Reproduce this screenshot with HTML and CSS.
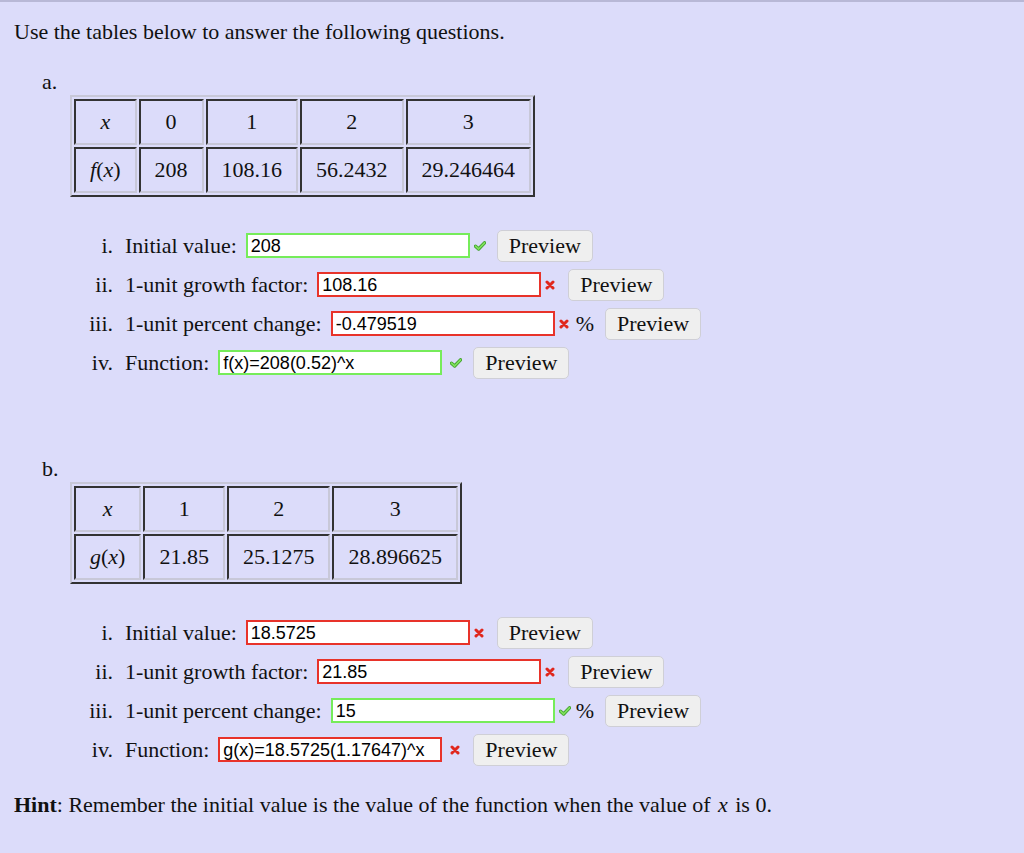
FILE: index.html
```html
<!DOCTYPE html>
<html lang="en">
<head>
<meta charset="UTF-8" />
<title>Exponential functions from tables</title>
<link rel="stylesheet" href="styles.css">
</head>
<body>

<div class="question">
    <p class="intro">Use the tables below to answer the following questions.</p>

    <!-- part a -->
    <div class="part-label">a.</div>
    <table class="values">
        <tr>
            <td><i>x</i></td>
            <td>0</td>
            <td>1</td>
            <td>2</td>
            <td>3</td>
        </tr>
        <tr>
            <td><i>f</i>(<i>x</i>)</td>
            <td>208</td>
            <td>108.16</td>
            <td>56.2432</td>
            <td>29.246464</td>
        </tr>
    </table>

    <div class="answers">
        <div class="item">
            <span class="num">i.</span>
            <span class="label">Initial value:</span>
            <input class="ans correct" type="text" value="208">
            <span class="mark"><svg width="12" height="10" viewBox="0 0 12 10"><path d="M1.5 5.2 L4.6 8 L10.5 1.8" fill="none" stroke="#3f9f2c" stroke-width="3.4" stroke-linecap="round" stroke-linejoin="round"/><path d="M1.5 5.2 L4.6 8 L10.5 1.8" fill="none" stroke="#7fe05c" stroke-width="1.8" stroke-linecap="round" stroke-linejoin="round"/></svg></span>
            <button>Preview</button>
        </div>
        <div class="item">
            <span class="num">ii.</span>
            <span class="label">1-unit growth factor:</span>
            <input class="ans wrong" type="text" value="108.16">
            <span class="mark"><svg width="10" height="10" viewBox="0 0 10 10"><path d="M2 2 L8 8 M8 2 L2 8" stroke="#e0271d" stroke-width="3" stroke-linecap="round"/></svg></span>
            <button>Preview</button>
        </div>
        <div class="item">
            <span class="num">iii.</span>
            <span class="label">1-unit percent change:</span>
            <input class="ans wrong" type="text" value="-0.479519">
            <span class="mark"><svg width="10" height="10" viewBox="0 0 10 10"><path d="M2 2 L8 8 M8 2 L2 8" stroke="#e0271d" stroke-width="3" stroke-linecap="round"/></svg></span>
            <span class="pct">%</span>
            <button>Preview</button>
        </div>
        <div class="item">
            <span class="num">iv.</span>
            <span class="label">Function:</span>
            <input class="ans correct" type="text" value="f(x)=208(0.52)^x">
            <span class="mark loose"><svg width="12" height="10" viewBox="0 0 12 10"><path d="M1.5 5.2 L4.6 8 L10.5 1.8" fill="none" stroke="#3f9f2c" stroke-width="3.4" stroke-linecap="round" stroke-linejoin="round"/><path d="M1.5 5.2 L4.6 8 L10.5 1.8" fill="none" stroke="#7fe05c" stroke-width="1.8" stroke-linecap="round" stroke-linejoin="round"/></svg></span>
            <button>Preview</button>
        </div>
    </div>

    <!-- part b -->
    <div class="part-label part-b">b.</div>
    <table class="values">
        <tr>
            <td><i>x</i></td>
            <td>1</td>
            <td>2</td>
            <td>3</td>
        </tr>
        <tr>
            <td><i>g</i>(<i>x</i>)</td>
            <td>21.85</td>
            <td>25.1275</td>
            <td>28.896625</td>
        </tr>
    </table>

    <div class="answers">
        <div class="item">
            <span class="num">i.</span>
            <span class="label">Initial value:</span>
            <input class="ans wrong" type="text" value="18.5725">
            <span class="mark"><svg width="10" height="10" viewBox="0 0 10 10"><path d="M2 2 L8 8 M8 2 L2 8" stroke="#e0271d" stroke-width="3" stroke-linecap="round"/></svg></span>
            <button>Preview</button>
        </div>
        <div class="item">
            <span class="num">ii.</span>
            <span class="label">1-unit growth factor:</span>
            <input class="ans wrong" type="text" value="21.85">
            <span class="mark"><svg width="10" height="10" viewBox="0 0 10 10"><path d="M2 2 L8 8 M8 2 L2 8" stroke="#e0271d" stroke-width="3" stroke-linecap="round"/></svg></span>
            <button>Preview</button>
        </div>
        <div class="item">
            <span class="num">iii.</span>
            <span class="label">1-unit percent change:</span>
            <input class="ans correct" type="text" value="15">
            <span class="mark"><svg width="12" height="10" viewBox="0 0 12 10"><path d="M1.5 5.2 L4.6 8 L10.5 1.8" fill="none" stroke="#3f9f2c" stroke-width="3.4" stroke-linecap="round" stroke-linejoin="round"/><path d="M1.5 5.2 L4.6 8 L10.5 1.8" fill="none" stroke="#7fe05c" stroke-width="1.8" stroke-linecap="round" stroke-linejoin="round"/></svg></span>
            <span class="pct">%</span>
            <button>Preview</button>
        </div>
        <div class="item">
            <span class="num">iv.</span>
            <span class="label">Function:</span>
            <input class="ans wrong" type="text" value="g(x)=18.5725(1.17647)^x">
            <span class="mark loose"><svg width="10" height="10" viewBox="0 0 10 10"><path d="M2 2 L8 8 M8 2 L2 8" stroke="#e0271d" stroke-width="3" stroke-linecap="round"/></svg></span>
            <button>Preview</button>
        </div>
    </div>

    <p class="hint"><b>Hint</b>: Remember the initial value is the value of the function when the value of <i class="math">x</i> is 0.</p>
</div>

</body>
</html>
```

FILE: styles.css
```css
html {
    background: #dcdcfa;
}

body {
    margin: 0;
    min-height: 853px;
    background: #dcdcfa;
    border-top: 2px solid #b8b8d6;
    font-family: "Liberation Serif", "Times New Roman", serif;
    font-size: 22px;
    color: #111;
}

.question {
    padding: 0 14px;
}

.intro {
    margin: 17px 0 0;
    line-height: 25px;
}

.part-label {
    margin: 25px 0 0 28px;
    line-height: 25px;
}

.part-b {
    margin-top: 74px;
}

/* value tables */
.values {
    margin: 1px 0 0 56px;
    border: 2px solid;
    border-color: #c8c8d8 #333 #333 #c8c8d8;
    border-spacing: 2px;
    font-size: 22px;
}

.values td {
    border: 2px solid;
    border-color: #333 #c8c8d8 #c8c8d8 #333;
    padding: 9px 14px;
    line-height: 24px;
    height: 24px;
    text-align: center;
}

.math {
    padding: 0 2px;
}

/* answer rows */
.answers {
    margin: 29px 0 0 56px;
}

.item {
    display: flex;
    align-items: center;
    height: 39px;
}

.num {
    width: 43px;
    text-align: right;
    margin-right: 12px;
}

.ans {
    margin-left: 9px;
    width: 224px;
    height: 25px;
    box-sizing: border-box;
    padding: 2px 3px 0;
    line-height: 21px;
    background: #fff;
    font-family: "Liberation Sans", Arial, sans-serif;
    font-size: 18px;
    color: #000;
    outline: none;
}

.ans.correct {
    border: 2px solid #76ec5a;
}

.ans.wrong {
    border: 2px solid #e8332a;
}

.mark {
    display: flex;
    margin-left: 4px;
    width: 12px;
}

.mark.loose {
    margin-left: 8px;
}

.pct {
    margin-left: 5px;
}

button {
    margin-left: 11px;
    height: 32px;
    padding: 0 11px;
    background: #efefef;
    border: 1px solid #cfcfd6;
    border-radius: 5px;
    font-family: "Liberation Serif", "Times New Roman", serif;
    font-size: 22px;
    color: #111;
}

.hint {
    margin: 23px 0 0;
    line-height: 25px;
}
```
